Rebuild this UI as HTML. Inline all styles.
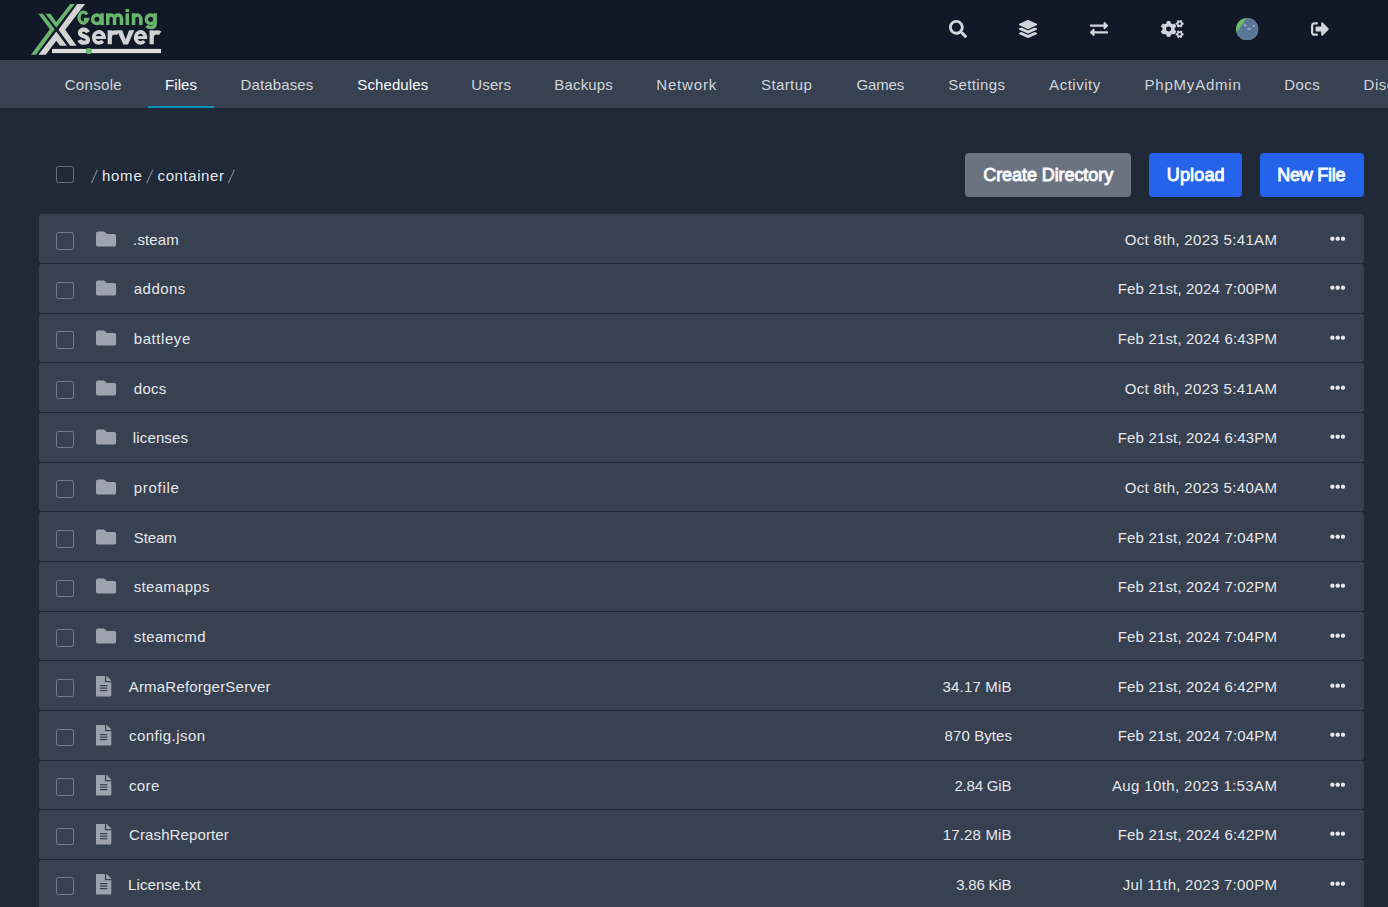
<!DOCTYPE html>
<html lang="en">
<head>
<meta charset="utf-8">
<title>Files | XGamingServer</title>
<style>
*{box-sizing:border-box;margin:0;padding:0}
html,body{width:1388px;height:907px;overflow:hidden;background:#1f2937;font-family:"Liberation Sans",sans-serif;}
#app{position:relative;width:1388px;height:907px;overflow:hidden;background:#1f2937;}
.topbar{position:absolute;left:0;top:0;width:1388px;height:60px;background:#111827;}
.subnav{position:absolute;left:0;top:60px;width:1388px;height:48px;background:#374151;}
.active{position:absolute;left:148px;top:105.7px;width:66px;height:2.3px;background:#0891b2;}
.t{position:absolute;white-space:nowrap;line-height:20px;height:20px;}
.row{position:absolute;left:39px;width:1325px;height:48.57px;background:#374151;border-radius:2.75px;}
.cb{position:absolute;width:18px;height:18px;border:1px solid #757d8c;border-radius:2.5px;}
.ic{position:absolute;display:block;overflow:visible}
.btn{position:absolute;top:153px;height:44.2px;border-radius:4px;}
.g{background:#6b7280;left:965px;width:166px;}
.b1{background:#2563eb;left:1149px;width:93px;}
.b2{background:#2563eb;left:1260px;width:104px;}
</style>
</head>
<body>
<div id="app">
<div class="topbar"></div>
<!-- logo -->
<svg class="ic" style="left:0;top:0;width:200px;height:60px" viewBox="0 0 200 60">
  <polygon fill="#69b56d" points="38.4,13.8 42.9,13.8 54.8,29.2 36.0,54.8 31.0,54.8 49.8,29.2"/>
  <polygon fill="#69b56d" points="45.5,13.8 50.5,13.8 56.3,22.0 70.2,4.1 74.9,4.1 56.3,27.7"/>
  <polygon fill="#d3d3d3" points="77.3,4.1 85.1,4.1 65.2,29.7 76.6,45.7 70.2,45.7 58.4,29.7"/>
  <polygon fill="#d3d3d3" points="56.3,31.6 66.9,45.7 60.0,45.7 56.3,40.7 45.7,54.8 38.4,54.8"/>
  <rect x="52" y="48.9" width="109" height="4.2" fill="#dedede"/>
  <circle cx="88.8" cy="51" r="3.1" fill="#69b56d"/>
  <g fill="none" stroke="#69b56d" stroke-width="3.5">
    <path d="M87.0 14.5 A4.35 5.5 0 1 0 87.55 19.4 H84.0" stroke-width="3.3"/>
    <circle cx="96.9" cy="19.35" r="4.25"/><path d="M102.05 13.3 V25.1"/>
    <path d="M107.75 25.1 V13.3 M107.75 18.5 A3.4 3.4 0 0 1 114.55 18.5 V25.1 M114.55 18.5 A3.45 3.4 0 0 1 121.45 18.5 V25.1"/>
    <path d="M127.3 13.6 V25.1 M127.3 9.0 V11.9"/>
    <path d="M133.55 25.1 V13.3 M133.55 18.7 A3.625 3.6 0 0 1 140.8 18.7 V25.1"/>
    <circle cx="150.65" cy="19.2" r="4.3"/><path d="M155.15 13.3 V23.4 Q155.15 27.55 150.9 27.55 Q148.2 27.55 146.5 25.9"/>
  </g>
  <g fill="none" stroke="#d3d3d3" stroke-width="4.2">
    <path d="M87.9 32.4 C87.0 30.5 85.5 29.7 83.7 29.7 C81.5 29.7 79.9 31.0 79.9 32.8 C79.9 34.8 81.6 35.5 83.9 36.2 C86.3 36.9 88.0 37.8 88.0 39.9 C88.0 41.7 86.2 42.7 83.8 42.7 C81.6 42.7 80.1 41.7 79.4 39.9"/>
    <path d="M103.95 37.4 A5.15 5.5 0 1 0 102.75 41.0" stroke-width="3.7"/><path d="M94.2 37.55 H105.8" stroke-width="3.0"/>
    <path d="M109.75 44.2 V30.2 M109.75 37.8 C109.75 33.6 112.4 32.3 115.0 32.3 C116.4 32.3 117.4 32.7 118.2 33.3"/>
    <path d="M145.35 37.4 A4.85 5.5 0 1 0 144.25 41.0" stroke-width="3.7"/><path d="M136.0 37.55 H147.2" stroke-width="3.0"/>
    <path d="M151.65 44.2 V30.2 M151.65 37.8 C151.65 33.6 154.3 32.3 156.9 32.3 C158.3 32.3 159.3 32.7 160.1 33.3"/>
  </g>
  <polygon fill="#d3d3d3" points="117.0,30.2 122.2,30.2 125.65,39.4 129.1,30.2 134.3,30.2 128.0,44.4 123.3,44.4"/>
</svg>
<!-- top icons -->
<svg class="ic" style="left:948.9px;top:19.8px;width:18.1px;height:18.1px" viewBox="0 0 512 512"><path fill="#d1d5db" d="M505 442.7L405.300 343c-4.500-4.500-10.600-7-17-7H372c27.600-35.300 44-79.700 44-128C416 93.100 322.900 0 208 0S0 93.100 0 208s93.100 208 208 208c48.300 0 92.700-16.400 128-44v16.300c0 6.400 2.500 12.500 7 17l99.700 99.700c9.400 9.400 24.600 9.400 33.900 0l28.300-28.300c9.400-9.400 9.400-24.600.1-34zM208 336c-70.700 0-128-57.200-128-128 0-70.700 57.200-128 128-128 70.700 0 128 57.200 128 128 0 70.700-57.200 128-128 128z"/></svg>
<svg class="ic" style="left:1018.95px;top:19.85px;width:18.1px;height:18.1px" viewBox="0 0 512 512"><path fill="#d1d5db" d="M12.410 148.020l232.940 105.670c6.800 3.090 14.490 3.090 21.290 0l232.940-105.670c16.550-7.510 16.550-32.520 0-40.030L266.650 2.310a25.607 25.607 0 0 0-21.290 0L12.410 107.980c-16.550 7.510-16.550 32.530 0 40.040zm487.180 88.280l-58.090-26.330-161.640 73.270c-7.560 3.430-15.590 5.170-23.860 5.170s-16.290-1.740-23.860-5.170L70.510 209.970l-58.100 26.330c-16.550 7.500-16.550 32.500 0 40l232.940 105.590c6.800 3.080 14.490 3.080 21.290 0L499.590 276.300c16.550-7.500 16.550-32.500 0-40zm0 127.800l-57.870-26.230-161.860 73.370c-7.560 3.430-15.590 5.170-23.860 5.170s-16.290-1.740-23.860-5.170L70.290 337.870 12.410 364.100c-16.550 7.500-16.550 32.500 0 40l232.940 105.590c6.800 3.080 14.490 3.080 21.290 0L499.590 404.100c16.550-7.500 16.550-32.500 0-40z"/></svg>
<svg class="ic" style="left:1090.0px;top:19.8px;width:18.1px;height:18.1px" viewBox="0 0 512 512"><path fill="#d1d5db" d="M0 168v-16c0-13.255 10.745-24 24-24h360V80c0-21.367 25.899-32.042 40.971-16.971l80 80c9.372 9.373 9.372 24.569 0 33.941l-80 80C409.956 271.982 384 261.456 384 240v-48H24c-13.255 0-24-10.745-24-24zm488 152H128v-48c0-21.314-25.862-32.080-40.971-16.971l-80 80c-9.372 9.373-9.372 24.569 0 33.941l80 80C102.057 463.997 128 453.437 128 432v-48h360c13.255 0 24-10.745 24-24v-16c0-13.255-10.745-24-24-24z"/></svg>
<svg class="ic" style="left:1160.7px;top:19.8px;width:22.62px;height:18.1px" viewBox="0 0 640 512"><path fill="#d1d5db" d="M512.100 191l-8.200 14.300c-3 5.300-9.400 7.500-15.100 5.400-11.800-4.400-22.600-10.700-32.100-18.600-4.600-3.800-5.800-10.500-2.800-15.700l8.200-14.300c-6.900-8-12.300-17.300-15.900-27.400h-16.500c-6 0-11.200-4.300-12.200-10.300-2-12-2.100-24.600 0-37.100 1-6 6.200-10.400 12.200-10.400h16.500c3.600-10.100 9-19.400 15.900-27.400l-8.200-14.300c-3-5.200-1.900-11.900 2.800-15.700 9.500-7.900 20.400-14.200 32.100-18.600 5.700-2.100 12.100.1 15.100 5.400l8.200 14.300c10.500-1.900 21.200-1.900 31.700 0L552 6.300c3-5.300 9.400-7.500 15.100-5.400 11.800 4.400 22.600 10.700 32.100 18.600 4.600 3.800 5.800 10.500 2.800 15.700l-8.200 14.300c6.900 8 12.300 17.300 15.900 27.400h16.500c6 0 11.200 4.300 12.200 10.300 2 12 2.100 24.600 0 37.100-1 6-6.200 10.400-12.200 10.400h-16.500c-3.600 10.100-9 19.400-15.900 27.400l8.200 14.300c3 5.200 1.900 11.900-2.800 15.700-9.500 7.900-20.400 14.200-32.100 18.600-5.700 2.100-12.100-.1-15.100-5.400l-8.200-14.300c-10.400 1.900-21.200 1.900-31.700 0zm-10.500-58.800c38.500 29.600 82.400-14.300 52.800-52.800-38.500-29.700-82.400 14.300-52.800 52.800zM386.300 286.100l33.700 16.800c10.100 5.800 14.500 18.100 10.500 29.100-8.900 24.200-26.400 46.400-42.600 65.800-7.400 8.900-20.200 11.100-30.300 5.300l-29.100-16.800c-16 13.700-34.600 24.600-54.900 31.700v33.600c0 11.600-8.300 21.600-19.700 23.600-24.600 4.200-50.400 4.400-75.900 0-11.500-2-20-11.900-20-23.600V418c-20.300-7.200-38.900-18-54.900-31.700L74 403c-10 5.800-22.900 3.600-30.300-5.300-16.200-19.400-33.300-41.600-42.200-65.700-4-10.900.4-23.200 10.500-29.100l33.300-16.800c-3.900-20.900-3.900-42.400 0-63.400L12 205.800c-10.100-5.800-14.600-18.100-10.500-29 8.900-24.200 26-46.400 42.200-65.800 7.400-8.900 20.200-11.100 30.300-5.300l29.100 16.800c16-13.700 34.600-24.600 54.900-31.700V57.100c0-11.500 8.200-21.500 19.600-23.500 24.600-4.200 50.500-4.400 76-.1 11.500 2 20 11.900 20 23.600v33.600c20.300 7.200 38.900 18 54.900 31.700l29.100-16.800c10-5.800 22.900-3.600 30.300 5.300 16.200 19.400 33.200 41.600 42.100 65.800 4 10.900.1 23.200-10 29.100l-33.700 16.800c3.900 21 3.900 42.500 0 63.500zm-117.600 21.100c59.200-77-28.700-164.900-105.700-105.700-59.200 77 28.700 164.900 105.700 105.700zm243.400 182.700l-8.200 14.300c-3 5.300-9.400 7.500-15.100 5.400-11.800-4.400-22.600-10.700-32.100-18.600-4.600-3.800-5.800-10.500-2.800-15.700l8.200-14.300c-6.900-8-12.300-17.300-15.900-27.400h-16.500c-6 0-11.200-4.300-12.200-10.300-2-12-2.100-24.600 0-37.100 1-6 6.200-10.400 12.200-10.400h16.500c3.600-10.100 9-19.400 15.900-27.400l-8.200-14.300c-3-5.200-1.900-11.900 2.800-15.700 9.500-7.900 20.400-14.200 32.100-18.600 5.700-2.100 12.100.1 15.100 5.400l8.200 14.300c10.500-1.900 21.200-1.900 31.700 0l8.200-14.300c3-5.300 9.400-7.500 15.100-5.400 11.800 4.400 22.600 10.700 32.100 18.600 4.600 3.800 5.800 10.500 2.800 15.700l-8.200 14.300c6.900 8 12.300 17.300 15.900 27.400h16.500c6 0 11.200 4.300 12.200 10.300 2 12 2.100 24.600 0 37.100-1 6-6.200 10.400-12.200 10.400h-16.500c-3.600 10.100-9 19.400-15.900 27.400l8.200 14.300c3 5.200 1.900 11.900-2.800 15.700-9.500 7.900-20.400 14.200-32.100 18.600-5.700 2.100-12.100-.1-15.100-5.400l-8.200-14.300c-10.400 1.900-21.200 1.900-31.700 0zM501.600 431c38.500 29.600 82.400-14.300 52.800-52.800-38.500-29.600-82.400 14.300-52.800 52.800z"/></svg>
<!-- avatar -->
<svg class="ic" style="left:1235.8px;top:17.8px;width:22.3px;height:22.3px" viewBox="0 0 22.3 22.3">
  <defs><clipPath id="av"><circle cx="11.15" cy="11.15" r="11.15"/></clipPath><clipPath id="av2"><circle cx="11.65" cy="10.65" r="11.6"/></clipPath></defs>
  <g clip-path="url(#av)">
    <rect width="22.3" height="22.3" fill="#6dba68"/>
    <g clip-path="url(#av2)"><polygon fill="#5a7698" points="13.06,-3.7 30,-3.7 30,30 -3.5,30 -3.5,20.95"/></g>
    <rect x="8.4" y="6.5" width="1.7" height="1.7" fill="#c3cfdd"/>
    <rect x="17.2" y="7.1" width="1.6" height="1.6" fill="#c3cfdd"/>
    <path d="M11.3 10.5 H15.1 V11.3 Q13.4 11.9 11.3 11.2Z" fill="#c3cfdd"/>
  </g>
</svg>
<svg class="ic" style="left:1310.8px;top:19.8px;width:18.1px;height:18.1px" viewBox="0 0 512 512"><path fill="#d1d5db" d="M497 273L329 441c-15 15-41 4.500-41-17v-96H152c-13.300 0-24-10.700-24-24v-96c0-13.300 10.700-24 24-24h136V88c0-21.400 25.900-32 41-17l168 168c9.300 9.400 9.300 24.600 0 34zM192 436v-40c0-6.600-5.400-12-12-12H96c-17.700 0-32-14.300-32-32V160c0-17.700 14.300-32 32-32h84c6.600 0 12-5.400 12-12V76c0-6.600-5.400-12-12-12H96c-53 0-96 43-96 96v192c0 53 43 96 96 96h84c6.600 0 12-5.400 12-12z"/></svg>

<div class="subnav"></div>
<div class="active"></div>

<!-- toolbar -->
<svg class="ic" style="left:80px;top:160px;width:170px;height:30px" viewBox="80 160 170 30"><g stroke="#7d8696" stroke-width="1.15" fill="none"><line x1="91.4" y1="183.2" x2="97.4" y2="169.8"/><line x1="146.7" y1="183.2" x2="152.8" y2="169.8"/><line x1="228.3" y1="183.2" x2="234.4" y2="169.8"/></g></svg>
<div class="cb" style="left:56px;top:166px;height:17px;border-color:#6b7280"></div>
<div class="btn g"></div><div class="btn b1"></div><div class="btn b2"></div>

<div class="row" style="top:214px;height:49px"></div>
<div class="cb" style="left:56px;top:232px;height:18px"></div>
<svg class="ic" style="left:95.9px;top:228.60px;width:20.1px;height:20.1px" viewBox="0 0 512 512"><path fill="#9ca3af" d="M464 128H272l-64-64H48C21.49 64 0 85.49 0 112v288c0 26.51 21.49 48 48 48h416c26.51 0 48-21.49 48-48V176c0-26.51-21.49-48-48-48z"/></svg>
<svg class="ic" style="left:1330px;top:231.20px;width:15.4px;height:15.4px" viewBox="0 0 512 512"><path fill="#e5e7eb" d="M328 256c0 39.800-32.200 72-72 72s-72-32.200-72-72 32.200-72 72-72 72 32.200 72 72zm104-72c-39.800 0-72 32.200-72 72s32.200 72 72 72 72-32.200 72-72-32.200-72-72-72zm-352 0c-39.800 0-72 32.200-72 72s32.200 72 72 72 72-32.200 72-72-32.200-72-72-72z"/></svg>
<div class="row" style="top:264px;height:49px"></div>
<div class="cb" style="left:56px;top:282px;height:17px"></div>
<svg class="ic" style="left:95.9px;top:277.60px;width:20.1px;height:20.1px" viewBox="0 0 512 512"><path fill="#9ca3af" d="M464 128H272l-64-64H48C21.49 64 0 85.49 0 112v288c0 26.51 21.49 48 48 48h416c26.51 0 48-21.49 48-48V176c0-26.51-21.49-48-48-48z"/></svg>
<svg class="ic" style="left:1330px;top:280.20px;width:15.4px;height:15.4px" viewBox="0 0 512 512"><path fill="#e5e7eb" d="M328 256c0 39.800-32.200 72-72 72s-72-32.200-72-72 32.200-72 72-72 72 32.200 72 72zm104-72c-39.800 0-72 32.200-72 72s32.200 72 72 72 72-32.200 72-72-32.200-72-72-72zm-352 0c-39.800 0-72 32.200-72 72s32.200 72 72 72 72-32.200 72-72-32.200-72-72-72z"/></svg>
<div class="row" style="top:314px;height:48px"></div>
<div class="cb" style="left:56px;top:331px;height:18px"></div>
<svg class="ic" style="left:95.9px;top:327.60px;width:20.1px;height:20.1px" viewBox="0 0 512 512"><path fill="#9ca3af" d="M464 128H272l-64-64H48C21.49 64 0 85.49 0 112v288c0 26.51 21.49 48 48 48h416c26.51 0 48-21.49 48-48V176c0-26.51-21.49-48-48-48z"/></svg>
<svg class="ic" style="left:1330px;top:330.20px;width:15.4px;height:15.4px" viewBox="0 0 512 512"><path fill="#e5e7eb" d="M328 256c0 39.800-32.200 72-72 72s-72-32.200-72-72 32.200-72 72-72 72 32.200 72 72zm104-72c-39.800 0-72 32.200-72 72s32.200 72 72 72 72-32.200 72-72-32.200-72-72-72zm-352 0c-39.800 0-72 32.200-72 72s32.200 72 72 72 72-32.200 72-72-32.200-72-72-72z"/></svg>
<div class="row" style="top:363px;height:49px"></div>
<div class="cb" style="left:56px;top:381px;height:18px"></div>
<svg class="ic" style="left:95.9px;top:377.60px;width:20.1px;height:20.1px" viewBox="0 0 512 512"><path fill="#9ca3af" d="M464 128H272l-64-64H48C21.49 64 0 85.49 0 112v288c0 26.51 21.49 48 48 48h416c26.51 0 48-21.49 48-48V176c0-26.51-21.49-48-48-48z"/></svg>
<svg class="ic" style="left:1330px;top:380.20px;width:15.4px;height:15.4px" viewBox="0 0 512 512"><path fill="#e5e7eb" d="M328 256c0 39.800-32.200 72-72 72s-72-32.200-72-72 32.200-72 72-72 72 32.200 72 72zm104-72c-39.800 0-72 32.200-72 72s32.200 72 72 72 72-32.200 72-72-32.200-72-72-72zm-352 0c-39.800 0-72 32.200-72 72s32.200 72 72 72 72-32.200 72-72-32.200-72-72-72z"/></svg>
<div class="row" style="top:413px;height:49px"></div>
<div class="cb" style="left:56px;top:431px;height:17px"></div>
<svg class="ic" style="left:95.9px;top:426.60px;width:20.1px;height:20.1px" viewBox="0 0 512 512"><path fill="#9ca3af" d="M464 128H272l-64-64H48C21.49 64 0 85.49 0 112v288c0 26.51 21.49 48 48 48h416c26.51 0 48-21.49 48-48V176c0-26.51-21.49-48-48-48z"/></svg>
<svg class="ic" style="left:1330px;top:429.20px;width:15.4px;height:15.4px" viewBox="0 0 512 512"><path fill="#e5e7eb" d="M328 256c0 39.800-32.200 72-72 72s-72-32.200-72-72 32.200-72 72-72 72 32.200 72 72zm104-72c-39.800 0-72 32.200-72 72s32.200 72 72 72 72-32.200 72-72-32.200-72-72-72zm-352 0c-39.800 0-72 32.200-72 72s32.200 72 72 72 72-32.200 72-72-32.200-72-72-72z"/></svg>
<div class="row" style="top:463px;height:48px"></div>
<div class="cb" style="left:56px;top:480px;height:18px"></div>
<svg class="ic" style="left:95.9px;top:476.60px;width:20.1px;height:20.1px" viewBox="0 0 512 512"><path fill="#9ca3af" d="M464 128H272l-64-64H48C21.49 64 0 85.49 0 112v288c0 26.51 21.49 48 48 48h416c26.51 0 48-21.49 48-48V176c0-26.51-21.49-48-48-48z"/></svg>
<svg class="ic" style="left:1330px;top:479.20px;width:15.4px;height:15.4px" viewBox="0 0 512 512"><path fill="#e5e7eb" d="M328 256c0 39.800-32.200 72-72 72s-72-32.200-72-72 32.200-72 72-72 72 32.200 72 72zm104-72c-39.800 0-72 32.200-72 72s32.200 72 72 72 72-32.200 72-72-32.200-72-72-72zm-352 0c-39.800 0-72 32.200-72 72s32.200 72 72 72 72-32.200 72-72-32.200-72-72-72z"/></svg>
<div class="row" style="top:512px;height:49px"></div>
<div class="cb" style="left:56px;top:530px;height:18px"></div>
<svg class="ic" style="left:95.9px;top:526.60px;width:20.1px;height:20.1px" viewBox="0 0 512 512"><path fill="#9ca3af" d="M464 128H272l-64-64H48C21.49 64 0 85.49 0 112v288c0 26.51 21.49 48 48 48h416c26.51 0 48-21.49 48-48V176c0-26.51-21.49-48-48-48z"/></svg>
<svg class="ic" style="left:1330px;top:529.20px;width:15.4px;height:15.4px" viewBox="0 0 512 512"><path fill="#e5e7eb" d="M328 256c0 39.800-32.200 72-72 72s-72-32.200-72-72 32.200-72 72-72 72 32.200 72 72zm104-72c-39.800 0-72 32.200-72 72s32.200 72 72 72 72-32.200 72-72-32.200-72-72-72zm-352 0c-39.800 0-72 32.200-72 72s32.200 72 72 72 72-32.200 72-72-32.200-72-72-72z"/></svg>
<div class="row" style="top:562px;height:49px"></div>
<div class="cb" style="left:56px;top:580px;height:17px"></div>
<svg class="ic" style="left:95.9px;top:575.60px;width:20.1px;height:20.1px" viewBox="0 0 512 512"><path fill="#9ca3af" d="M464 128H272l-64-64H48C21.49 64 0 85.49 0 112v288c0 26.51 21.49 48 48 48h416c26.51 0 48-21.49 48-48V176c0-26.51-21.49-48-48-48z"/></svg>
<svg class="ic" style="left:1330px;top:578.20px;width:15.4px;height:15.4px" viewBox="0 0 512 512"><path fill="#e5e7eb" d="M328 256c0 39.800-32.200 72-72 72s-72-32.200-72-72 32.200-72 72-72 72 32.200 72 72zm104-72c-39.800 0-72 32.200-72 72s32.200 72 72 72 72-32.200 72-72-32.200-72-72-72zm-352 0c-39.800 0-72 32.200-72 72s32.200 72 72 72 72-32.200 72-72-32.200-72-72-72z"/></svg>
<div class="row" style="top:612px;height:48px"></div>
<div class="cb" style="left:56px;top:629px;height:18px"></div>
<svg class="ic" style="left:95.9px;top:625.60px;width:20.1px;height:20.1px" viewBox="0 0 512 512"><path fill="#9ca3af" d="M464 128H272l-64-64H48C21.49 64 0 85.49 0 112v288c0 26.51 21.49 48 48 48h416c26.51 0 48-21.49 48-48V176c0-26.51-21.49-48-48-48z"/></svg>
<svg class="ic" style="left:1330px;top:628.20px;width:15.4px;height:15.4px" viewBox="0 0 512 512"><path fill="#e5e7eb" d="M328 256c0 39.800-32.200 72-72 72s-72-32.200-72-72 32.200-72 72-72 72 32.200 72 72zm104-72c-39.800 0-72 32.200-72 72s32.200 72 72 72 72-32.200 72-72-32.200-72-72-72zm-352 0c-39.800 0-72 32.200-72 72s32.200 72 72 72 72-32.200 72-72-32.200-72-72-72z"/></svg>
<div class="row" style="top:661px;height:49px"></div>
<div class="cb" style="left:56px;top:679px;height:18px"></div>
<svg class="ic" style="left:95.9px;top:675.60px;width:15.3px;height:20.4px" viewBox="0 0 384 512"><path fill="#9ca3af" d="M224 136V0H24C10.7 0 0 10.7 0 24v464c0 13.3 10.7 24 24 24h336c13.3 0 24-10.700 24-24V160H248c-13.200 0-24-10.800-24-24zm64 236c0 6.600-5.400 12-12 12H108c-6.600 0-12-5.400-12-12v-8c0-6.600 5.400-12 12-12h168c6.600 0 12 5.400 12 12v8zm0-64c0 6.600-5.400 12-12 12H108c-6.600 0-12-5.400-12-12v-8c0-6.600 5.400-12 12-12h168c6.600 0 12 5.400 12 12v8zm0-72v8c0 6.600-5.400 12-12 12H108c-6.600 0-12-5.400-12-12v-8c0-6.600 5.400-12 12-12h168c6.600 0 12 5.400 12 12zm96-114.100v6.100H256V0h6.100c6.400 0 12.500 2.500 17 7l97.900 98c4.500 4.500 7 10.600 7 16.900z"/></svg>
<svg class="ic" style="left:1330px;top:678.20px;width:15.4px;height:15.4px" viewBox="0 0 512 512"><path fill="#e5e7eb" d="M328 256c0 39.800-32.200 72-72 72s-72-32.200-72-72 32.200-72 72-72 72 32.200 72 72zm104-72c-39.800 0-72 32.200-72 72s32.200 72 72 72 72-32.200 72-72-32.200-72-72-72zm-352 0c-39.800 0-72 32.200-72 72s32.200 72 72 72 72-32.200 72-72-32.200-72-72-72z"/></svg>
<div class="row" style="top:711px;height:49px"></div>
<div class="cb" style="left:56px;top:729px;height:17px"></div>
<svg class="ic" style="left:95.9px;top:724.60px;width:15.3px;height:20.4px" viewBox="0 0 384 512"><path fill="#9ca3af" d="M224 136V0H24C10.7 0 0 10.7 0 24v464c0 13.3 10.7 24 24 24h336c13.3 0 24-10.700 24-24V160H248c-13.200 0-24-10.800-24-24zm64 236c0 6.600-5.400 12-12 12H108c-6.600 0-12-5.400-12-12v-8c0-6.600 5.400-12 12-12h168c6.600 0 12 5.400 12 12v8zm0-64c0 6.600-5.400 12-12 12H108c-6.600 0-12-5.400-12-12v-8c0-6.600 5.400-12 12-12h168c6.600 0 12 5.400 12 12v8zm0-72v8c0 6.600-5.400 12-12 12H108c-6.600 0-12-5.400-12-12v-8c0-6.600 5.400-12 12-12h168c6.600 0 12 5.400 12 12zm96-114.100v6.100H256V0h6.100c6.400 0 12.500 2.500 17 7l97.900 98c4.500 4.500 7 10.600 7 16.900z"/></svg>
<svg class="ic" style="left:1330px;top:727.20px;width:15.4px;height:15.4px" viewBox="0 0 512 512"><path fill="#e5e7eb" d="M328 256c0 39.800-32.200 72-72 72s-72-32.200-72-72 32.200-72 72-72 72 32.200 72 72zm104-72c-39.800 0-72 32.200-72 72s32.200 72 72 72 72-32.200 72-72-32.200-72-72-72zm-352 0c-39.800 0-72 32.200-72 72s32.200 72 72 72 72-32.200 72-72-32.200-72-72-72z"/></svg>
<div class="row" style="top:761px;height:48px"></div>
<div class="cb" style="left:56px;top:778px;height:18px"></div>
<svg class="ic" style="left:95.9px;top:774.60px;width:15.3px;height:20.4px" viewBox="0 0 384 512"><path fill="#9ca3af" d="M224 136V0H24C10.7 0 0 10.7 0 24v464c0 13.3 10.7 24 24 24h336c13.3 0 24-10.700 24-24V160H248c-13.200 0-24-10.800-24-24zm64 236c0 6.600-5.400 12-12 12H108c-6.600 0-12-5.400-12-12v-8c0-6.600 5.400-12 12-12h168c6.600 0 12 5.400 12 12v8zm0-64c0 6.600-5.400 12-12 12H108c-6.600 0-12-5.400-12-12v-8c0-6.600 5.400-12 12-12h168c6.600 0 12 5.400 12 12v8zm0-72v8c0 6.600-5.400 12-12 12H108c-6.600 0-12-5.400-12-12v-8c0-6.600 5.400-12 12-12h168c6.600 0 12 5.400 12 12zm96-114.100v6.100H256V0h6.100c6.400 0 12.500 2.500 17 7l97.900 98c4.500 4.500 7 10.600 7 16.900z"/></svg>
<svg class="ic" style="left:1330px;top:777.20px;width:15.4px;height:15.4px" viewBox="0 0 512 512"><path fill="#e5e7eb" d="M328 256c0 39.800-32.200 72-72 72s-72-32.200-72-72 32.200-72 72-72 72 32.200 72 72zm104-72c-39.800 0-72 32.200-72 72s32.200 72 72 72 72-32.200 72-72-32.200-72-72-72zm-352 0c-39.800 0-72 32.200-72 72s32.200 72 72 72 72-32.200 72-72-32.200-72-72-72z"/></svg>
<div class="row" style="top:810px;height:49px"></div>
<div class="cb" style="left:56px;top:828px;height:17px"></div>
<svg class="ic" style="left:95.9px;top:823.60px;width:15.3px;height:20.4px" viewBox="0 0 384 512"><path fill="#9ca3af" d="M224 136V0H24C10.7 0 0 10.7 0 24v464c0 13.3 10.7 24 24 24h336c13.3 0 24-10.700 24-24V160H248c-13.200 0-24-10.800-24-24zm64 236c0 6.600-5.400 12-12 12H108c-6.600 0-12-5.400-12-12v-8c0-6.600 5.400-12 12-12h168c6.600 0 12 5.400 12 12v8zm0-64c0 6.600-5.400 12-12 12H108c-6.600 0-12-5.400-12-12v-8c0-6.600 5.400-12 12-12h168c6.600 0 12 5.400 12 12v8zm0-72v8c0 6.600-5.400 12-12 12H108c-6.600 0-12-5.400-12-12v-8c0-6.600 5.400-12 12-12h168c6.600 0 12 5.400 12 12zm96-114.100v6.100H256V0h6.100c6.400 0 12.500 2.500 17 7l97.900 98c4.500 4.500 7 10.600 7 16.900z"/></svg>
<svg class="ic" style="left:1330px;top:826.20px;width:15.4px;height:15.4px" viewBox="0 0 512 512"><path fill="#e5e7eb" d="M328 256c0 39.800-32.200 72-72 72s-72-32.200-72-72 32.200-72 72-72 72 32.200 72 72zm104-72c-39.800 0-72 32.200-72 72s32.200 72 72 72 72-32.200 72-72-32.200-72-72-72zm-352 0c-39.800 0-72 32.200-72 72s32.200 72 72 72 72-32.200 72-72-32.200-72-72-72z"/></svg>
<div class="row" style="top:860px;height:49px"></div>
<div class="cb" style="left:56px;top:877px;height:18px"></div>
<svg class="ic" style="left:95.9px;top:873.60px;width:15.3px;height:20.4px" viewBox="0 0 384 512"><path fill="#9ca3af" d="M224 136V0H24C10.7 0 0 10.7 0 24v464c0 13.3 10.7 24 24 24h336c13.3 0 24-10.700 24-24V160H248c-13.200 0-24-10.800-24-24zm64 236c0 6.600-5.400 12-12 12H108c-6.600 0-12-5.400-12-12v-8c0-6.600 5.400-12 12-12h168c6.600 0 12 5.400 12 12v8zm0-64c0 6.600-5.400 12-12 12H108c-6.600 0-12-5.400-12-12v-8c0-6.600 5.400-12 12-12h168c6.600 0 12 5.400 12 12v8zm0-72v8c0 6.600-5.400 12-12 12H108c-6.600 0-12-5.400-12-12v-8c0-6.600 5.400-12 12-12h168c6.600 0 12 5.400 12 12zm96-114.100v6.100H256V0h6.100c6.400 0 12.500 2.500 17 7l97.900 98c4.500 4.500 7 10.600 7 16.900z"/></svg>
<svg class="ic" style="left:1330px;top:876.20px;width:15.4px;height:15.4px" viewBox="0 0 512 512"><path fill="#e5e7eb" d="M328 256c0 39.800-32.200 72-72 72s-72-32.200-72-72 32.200-72 72-72 72 32.200 72 72zm104-72c-39.800 0-72 32.200-72 72s32.200 72 72 72 72-32.200 72-72-32.200-72-72-72zm-352 0c-39.800 0-72 32.200-72 72s32.200 72 72 72 72-32.200 72-72-32.200-72-72-72z"/></svg>
<span class="t" style="left:64.70px;top:75.20px;font-size:15.0px;color:#d1d5db;letter-spacing:0.318px;">Console</span>
<span class="t" style="left:165.10px;top:75.20px;font-size:15.0px;color:#f9fafb;letter-spacing:0.058px;">Files</span>
<span class="t" style="left:240.50px;top:75.20px;font-size:15.0px;color:#d1d5db;letter-spacing:0.136px;">Databases</span>
<span class="t" style="left:357.30px;top:75.20px;font-size:15.0px;color:#f9fafb;letter-spacing:0.106px;">Schedules</span>
<span class="t" style="left:471.30px;top:75.20px;font-size:15.0px;color:#d1d5db;letter-spacing:0.133px;">Users</span>
<span class="t" style="left:554.30px;top:75.20px;font-size:15.0px;color:#d1d5db;letter-spacing:0.161px;">Backups</span>
<span class="t" style="left:656.30px;top:75.20px;font-size:15.0px;color:#d1d5db;letter-spacing:0.815px;">Network</span>
<span class="t" style="left:761.00px;top:75.20px;font-size:15.0px;color:#d1d5db;letter-spacing:0.397px;">Startup</span>
<span class="t" style="left:856.60px;top:75.20px;font-size:15.0px;color:#d1d5db;letter-spacing:-0.187px;">Games</span>
<span class="t" style="left:948.20px;top:75.20px;font-size:15.0px;color:#d1d5db;letter-spacing:0.357px;">Settings</span>
<span class="t" style="left:1049.10px;top:75.20px;font-size:15.0px;color:#d1d5db;letter-spacing:0.528px;">Activity</span>
<span class="t" style="left:1144.60px;top:75.20px;font-size:15.0px;color:#d1d5db;letter-spacing:0.771px;">PhpMyAdmin</span>
<span class="t" style="left:1284.30px;top:75.20px;font-size:15.0px;color:#d1d5db;letter-spacing:0.442px;">Docs</span>
<span class="t" style="left:1363.60px;top:75.20px;font-size:15.0px;color:#d1d5db;letter-spacing:0.500px;">Discord</span>
<span class="t" style="left:101.90px;top:165.80px;font-size:15.0px;color:#e5e7eb;letter-spacing:0.773px;">home</span>
<span class="t" style="left:157.60px;top:165.80px;font-size:15.0px;color:#e5e7eb;letter-spacing:0.574px;">container</span>
<span class="t" style="left:983.25px;top:164.76px;font-size:18px;color:#f9fafb;letter-spacing:-0.076px;-webkit-text-stroke:0.9px #f9fafb;">Create Directory</span>
<span class="t" style="left:1166.75px;top:164.76px;font-size:18px;color:#f9fafb;letter-spacing:0.154px;-webkit-text-stroke:0.9px #f9fafb;">Upload</span>
<span class="t" style="left:1277.35px;top:164.76px;font-size:18px;color:#f9fafb;letter-spacing:-0.258px;-webkit-text-stroke:0.9px #f9fafb;">New File</span>
<span class="t" style="left:133.10px;top:229.80px;font-size:15.0px;color:#e5e7eb;letter-spacing:0.136px;">.steam</span>
<span class="t" style="left:1124.70px;top:229.80px;font-size:15.0px;color:#e5e7eb;letter-spacing:0.330px;">Oct 8th, 2023 5:41AM</span>
<span class="t" style="left:133.80px;top:278.80px;font-size:15.0px;color:#e5e7eb;letter-spacing:0.458px;">addons</span>
<span class="t" style="left:1117.80px;top:278.80px;font-size:15.0px;color:#e5e7eb;letter-spacing:0.158px;">Feb 21st, 2024 7:00PM</span>
<span class="t" style="left:133.80px;top:328.80px;font-size:15.0px;color:#e5e7eb;letter-spacing:0.558px;">battleye</span>
<span class="t" style="left:1117.80px;top:328.80px;font-size:15.0px;color:#e5e7eb;letter-spacing:0.158px;">Feb 21st, 2024 6:43PM</span>
<span class="t" style="left:133.80px;top:378.80px;font-size:15.0px;color:#e5e7eb;letter-spacing:0.272px;">docs</span>
<span class="t" style="left:1124.70px;top:378.80px;font-size:15.0px;color:#e5e7eb;letter-spacing:0.330px;">Oct 8th, 2023 5:41AM</span>
<span class="t" style="left:132.80px;top:427.80px;font-size:15.0px;color:#e5e7eb;letter-spacing:0.144px;">licenses</span>
<span class="t" style="left:1117.80px;top:427.80px;font-size:15.0px;color:#e5e7eb;letter-spacing:0.158px;">Feb 21st, 2024 6:43PM</span>
<span class="t" style="left:133.80px;top:477.80px;font-size:15.0px;color:#e5e7eb;letter-spacing:0.698px;">profile</span>
<span class="t" style="left:1124.70px;top:477.80px;font-size:15.0px;color:#e5e7eb;letter-spacing:0.330px;">Oct 8th, 2023 5:40AM</span>
<span class="t" style="left:133.80px;top:527.80px;font-size:15.0px;color:#e5e7eb;letter-spacing:-0.139px;">Steam</span>
<span class="t" style="left:1117.80px;top:527.80px;font-size:15.0px;color:#e5e7eb;letter-spacing:0.158px;">Feb 21st, 2024 7:04PM</span>
<span class="t" style="left:133.80px;top:576.80px;font-size:15.0px;color:#e5e7eb;letter-spacing:0.278px;">steamapps</span>
<span class="t" style="left:1117.80px;top:576.80px;font-size:15.0px;color:#e5e7eb;letter-spacing:0.158px;">Feb 21st, 2024 7:02PM</span>
<span class="t" style="left:133.80px;top:626.80px;font-size:15.0px;color:#e5e7eb;letter-spacing:0.365px;">steamcmd</span>
<span class="t" style="left:1117.80px;top:626.80px;font-size:15.0px;color:#e5e7eb;letter-spacing:0.158px;">Feb 21st, 2024 7:04PM</span>
<span class="t" style="left:128.70px;top:676.80px;font-size:15.0px;color:#e5e7eb;letter-spacing:0.207px;">ArmaReforgerServer</span>
<span class="t" style="left:942.50px;top:676.80px;font-size:15.0px;color:#e5e7eb;letter-spacing:0.184px;">34.17 MiB</span>
<span class="t" style="left:1117.80px;top:676.80px;font-size:15.0px;color:#e5e7eb;letter-spacing:0.158px;">Feb 21st, 2024 6:42PM</span>
<span class="t" style="left:129.00px;top:725.80px;font-size:15.0px;color:#e5e7eb;letter-spacing:0.433px;">config.json</span>
<span class="t" style="left:944.60px;top:725.80px;font-size:15.0px;color:#e5e7eb;letter-spacing:0.086px;">870 Bytes</span>
<span class="t" style="left:1117.80px;top:725.80px;font-size:15.0px;color:#e5e7eb;letter-spacing:0.158px;">Feb 21st, 2024 7:04PM</span>
<span class="t" style="left:129.00px;top:775.80px;font-size:15.0px;color:#e5e7eb;letter-spacing:0.354px;">core</span>
<span class="t" style="left:954.40px;top:775.80px;font-size:15.0px;color:#e5e7eb;letter-spacing:-0.180px;">2.84 GiB</span>
<span class="t" style="left:1112.00px;top:775.80px;font-size:15.0px;color:#e5e7eb;letter-spacing:0.364px;">Aug 10th, 2023 1:53AM</span>
<span class="t" style="left:129.00px;top:824.80px;font-size:15.0px;color:#e5e7eb;letter-spacing:0.119px;">CrashReporter</span>
<span class="t" style="left:942.80px;top:824.80px;font-size:15.0px;color:#e5e7eb;letter-spacing:0.146px;">17.28 MiB</span>
<span class="t" style="left:1117.80px;top:824.80px;font-size:15.0px;color:#e5e7eb;letter-spacing:0.158px;">Feb 21st, 2024 6:42PM</span>
<span class="t" style="left:128.10px;top:874.80px;font-size:15.0px;color:#e5e7eb;letter-spacing:0.086px;">License.txt</span>
<span class="t" style="left:956.20px;top:874.80px;font-size:15.0px;color:#e5e7eb;letter-spacing:-0.200px;">3.86 KiB</span>
<span class="t" style="left:1122.80px;top:874.80px;font-size:15.0px;color:#e5e7eb;letter-spacing:0.255px;">Jul 11th, 2023 7:00PM</span>
</div>
</body>
</html>
